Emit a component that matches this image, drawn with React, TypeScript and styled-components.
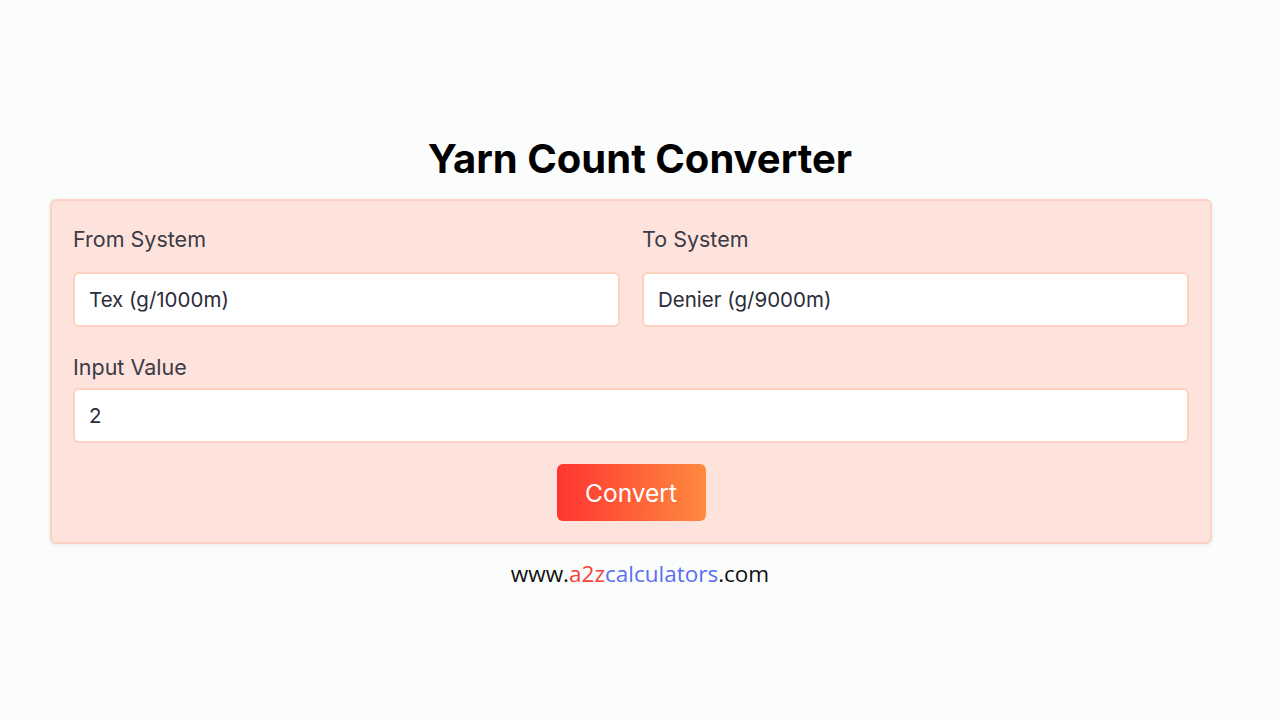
import styled, { createGlobalStyle } from "styled-components";

const GlobalStyle = createGlobalStyle`
  html, body {
    margin: 0;
    padding: 0;
    background: #fbfdfc;
  }
  * {
    box-sizing: border-box;
  }
`;

const Page = styled.main`
  width: 1280px;
  height: 720px;
  display: flex;
  flex-direction: column;
  align-items: center;
  padding-top: 135px;
  font-family: Inter, "Noto Sans", sans-serif;
`;

const Title = styled.h1`
  margin: 0 0 16px;
  font-size: 40px;
  line-height: 48px;
  font-weight: 700;
  color: #000;
`;

const Card = styled.section`
  width: 1162px;
  margin-left: -18px;
  background: #fee3dc;
  border: 2px solid #fdd2c4;
  border-radius: 6px;
  box-shadow: 0 1px 4px rgba(0, 0, 0, 0.08);
  padding: 22px 21px 21px;
  display: flex;
  flex-direction: column;
`;

const Row = styled.div`
  display: grid;
  grid-template-columns: 1fr 1fr;
  column-gap: 22px;
  margin-bottom: 24px;
`;

const Field = styled.div`
  display: flex;
  flex-direction: column;
`;

const Label = styled.label`
  font-size: 21.5px;
  line-height: 26px;
  color: #3b3b47;
  margin-bottom: 20px;
  padding-top: 3px;
`;

const FieldInput = styled.div`
  height: 55px;
  background: #fff;
  border: 2px solid #fdd0c0;
  border-radius: 6px;
  padding: 0 14px;
  display: flex;
  align-items: center;
  font-size: 20.5px;
  color: #2c2c3a;
`;

const ValueLabel = styled(Label)`
  margin-bottom: 8px;
`;

const Actions = styled.div`
  display: flex;
  justify-content: center;
  margin-top: 21px;
`;

const ConvertButton = styled.button`
  width: 149px;
  height: 57px;
  border: none;
  border-radius: 6px;
  background: linear-gradient(90deg, #ff3531, #ff8a3f);
  color: #fff;
  font-family: Inter, "Noto Sans", sans-serif;
  font-size: 24.5px;
  cursor: pointer;
`;

const Footer = styled.p`
  margin: 14px 0 0;
  font-family: "Open Sans", sans-serif;
  font-size: 22.5px;
  color: #111;
`;

const Brand = styled.span<{ tone: string }>`
  color: ${(p) => p.tone};
`;

export default function App() {
  return (
    <>
      <GlobalStyle />
      <Page>
        <Title>Yarn Count Converter</Title>
        <Card>
          <Row>
            <Field>
              <Label>From System</Label>
              <FieldInput>Tex (g/1000m)</FieldInput>
            </Field>
            <Field>
              <Label>To System</Label>
              <FieldInput>Denier (g/9000m)</FieldInput>
            </Field>
          </Row>
          <Field>
            <ValueLabel>Input Value</ValueLabel>
            <FieldInput>2</FieldInput>
          </Field>
          <Actions>
            <ConvertButton>Convert</ConvertButton>
          </Actions>
        </Card>
        <Footer>
          www.<Brand tone="#f4433a">a2z</Brand>
          <Brand tone="#5a6ef2">calculators</Brand>.com
        </Footer>
      </Page>
    </>
  );
}
